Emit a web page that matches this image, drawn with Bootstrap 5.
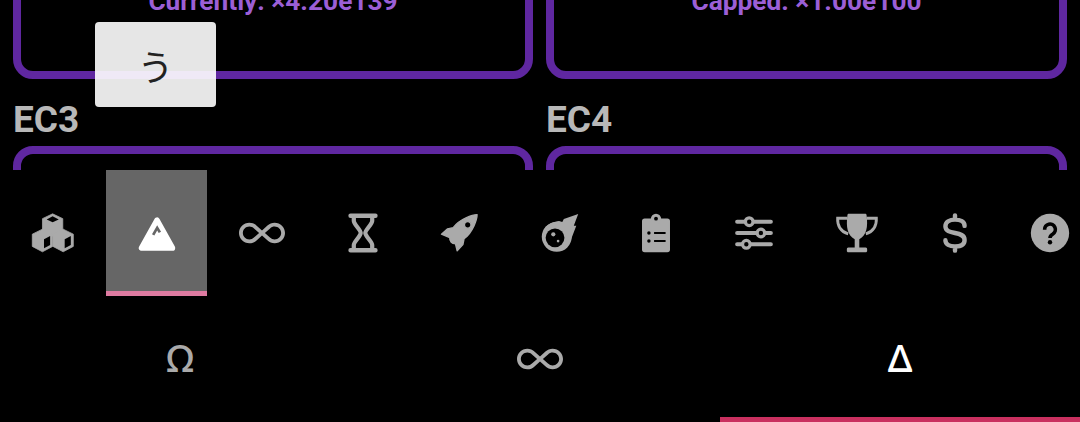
<!DOCTYPE html>
<html lang="en">
<head>
  <meta charset="UTF-8" />
  <meta name="viewport" content="width=device-width, initial-scale=1.0" />
  <title>Epsilon Challenges</title>
  <link href="https://cdn.jsdelivr.net/npm/bootstrap@5.3.3/dist/css/bootstrap.min.css" rel="stylesheet">
  <style>
    body {
      background-color: #000;
      font-family: Roboto, "Noto Sans", sans-serif;
      overflow: hidden;
    }
    .page-wrap {
      width: 1080px;
      height: 422px;
    }
    .scroll-area {
      height: 170px;
      overflow: hidden;
      padding: 0 13px;
    }
    .ec-row {
      --bs-gutter-x: 13px;
      --bs-gutter-y: 0;
    }
    .ec-row > .ec-left {
      width: 533px;
    }
    .ec-row > .ec-right {
      width: 534px;
    }
    .ec-card {
      background: transparent;
      border: 8px solid #5f27a0;
      border-radius: 20px;
    }
    .ec-card.cut-top {
      height: 139px;
      margin-top: -60px;
      text-align: center;
    }
    .ec-card.cut-bottom {
      height: 100px;
    }
    .ec-reward {
      color: #9c5fd6;
      font-size: 26.3px;
      font-weight: 700;
      line-height: 30px;
      margin-top: 38px;
    }
    .ec-title {
      color: #b8b8b8;
      font-size: 37px;
      font-weight: 700;
      line-height: 43px;
      margin: 19px 0 5px 0;
    }
    .kana-tip {
      position: absolute;
      left: 95px;
      top: 22px;
      width: 121px;
      height: 85px;
      background: rgba(255, 255, 255, .9);
      border-radius: 4px;
      color: #222;
      font-family: "Noto Sans CJK JP", sans-serif;
      font-size: 36px;
    }
    .tab-bar {
      display: grid;
      grid-template-columns: 106px 101px 110px 91px 105px 94px 98px 98px 108px 88px 102px;
      height: 126px;
      overflow: hidden;
      width: 1080px;
    }
    .tab-bar .nav-link,
    .sub-tabs .nav-link {
      color: #aaa;
      padding: 0;
      border-bottom: 5px solid transparent;
      border-top: 5px solid transparent;
      border-radius: 0;
    }
    .tab-bar .nav-link.active {
      background: #666;
      color: #fff;
      border-bottom-color: #de7ba1;
      border-top-color: #666;
    }
    .tab-bar svg,
    .sub-tabs svg {
      display: block;
      fill: currentColor;
    }
    .sub-tabs {
      height: 126px;
    }
    .sub-tabs .nav-link {
      font-family: "Noto Sans", sans-serif;
      font-size: 38px;
      font-weight: 500;
      line-height: 1;
    }
    .sub-tabs .nav-link.active {
      color: #fff;
      border-bottom-color: #c9305f;
    }
    .tab-glyph {
      padding-bottom: 4px;
    }
  </style>
</head>
<body>
  <div class="page-wrap position-relative">
    <div class="scroll-area">
      <div class="row ec-row">
        <div class="col-6 ec-left">
          <div class="card ec-card cut-top"><div class="ec-reward">Currently: ×4.20e139</div></div>
          <div class="ec-title">EC3</div>
          <div class="card ec-card cut-bottom"></div>
        </div>
        <div class="col-6 ec-right">
          <div class="card ec-card cut-top"><div class="ec-reward">Capped: ×1.00e100</div></div>
          <div class="ec-title">EC4</div>
          <div class="card ec-card cut-bottom"></div>
        </div>
      </div>
    </div>

    <div class="kana-tip d-flex align-items-center justify-content-center">う</div>

    <!-- main tabs -->
    <nav class="nav flex-nowrap tab-bar">
      <a class="nav-link d-flex align-items-center justify-content-center" href="#">
        <svg width="46" height="46" viewBox="0 0 24 24">
          <path d="M11.800 2 17.100 4.500V11L11.800 13.600 6.500 11V4.500Z" stroke="currentColor" stroke-width=".4" stroke-linejoin="round"/>
          <path d="M6.500 10 11.800 12.600V19L6.500 21.800 1.200 19V12.600Z" stroke="currentColor" stroke-width=".4" stroke-linejoin="round"/>
          <path d="M17.300 10 22.600 12.600V19L17.300 21.800 12 19V12.600Z" stroke="currentColor" stroke-width=".4" stroke-linejoin="round"/>
          <path d="M11.800 3.300 15 4.900 11.800 6.400 8.700 4.900Z" fill="#000"/>
          <path d="M7.300 15.200 10.500 13.600V18.300L7.300 20Z" fill="#000"/>
          <path d="M18.100 15.200 21.300 13.600V18.300L18.100 20Z" fill="#000"/>
        </svg>
      </a>
      <a class="nav-link active d-flex align-items-center justify-content-center" href="#">
        <svg width="46" height="46" viewBox="0 0 24 24">
          <path d="M12 5.400 4 19.800H20Z" stroke="currentColor" stroke-width="3" stroke-linejoin="round"/>
          <path d="M10 13 12.100 9.300 13.500 11.700" fill="none" stroke="#666" stroke-width="1.400"/>
        </svg>
      </a>
      <a class="nav-link d-flex align-items-center justify-content-center" href="#">
        <svg width="46" height="46" viewBox="0 0 24 24"><path d="M18.6,6.62C21.58,6.62 24,9 24,12C24,14.96 21.58,17.37 18.6,17.37C17.15,17.37 15.8,16.81 14.78,15.8L12,13.34L9.17,15.85C8.2,16.82 6.84,17.38 5.4,17.38C2.42,17.38 0,14.96 0,12C0,9.04 2.42,6.62 5.4,6.62C6.84,6.62 8.2,7.18 9.22,8.2L12,10.66L14.83,8.15C15.8,7.18 17.16,6.62 18.6,6.62M7.8,14.39L10.5,12L7.84,9.65C7.16,8.97 6.31,8.62 5.4,8.62C3.53,8.62 2,10.13 2,12C2,13.87 3.53,15.38 5.4,15.38C6.31,15.38 7.16,15.03 7.8,14.39M16.2,9.61L13.5,12L16.16,14.35C16.84,15.03 17.7,15.38 18.6,15.38C20.47,15.38 22,13.87 22,12C22,10.13 20.47,8.62 18.6,8.62C17.69,8.62 16.84,8.97 16.2,9.61Z"/></svg>
      </a>
      <a class="nav-link d-flex align-items-center justify-content-center" href="#">
        <svg width="46" height="46" viewBox="0 0 24 24">
          <path d="M5.500 3H18.500M5.500 21H18.500" stroke="currentColor" stroke-width="2.300" stroke-linecap="round"/>
          <path d="M7.200 3V5.800C7.200 7.400 10.800 10.400 10.800 12C10.800 13.600 7.200 16.600 7.200 18.200V21M16.800 3V5.800C16.800 7.400 13.200 10.400 13.200 12C13.200 13.600 16.800 16.600 16.800 18.200V21" fill="none" stroke="currentColor" stroke-width="2.200"/>
        </svg>
      </a>
      <a class="nav-link d-flex align-items-center justify-content-center" href="#">
        <svg width="46" height="46" viewBox="0 0 24 24">
          <path fill-rule="evenodd" transform="translate(-.8 0)" stroke="currentColor" stroke-width=".7" stroke-linejoin="round" d="M2.600 12.600 5.800 9.800 8.700 9.200C12.100 4.500 19 2.400 21.200 2.400C21.200 4.700 19.100 11.600 14.400 15L13.800 18 10.800 21.300 9.900 17.600C8.500 17.600 8.500 17.600 7.700 16.800C6.900 16 6.900 16 6.900 14.400ZM16.300 6.100A1.700 1.700 0 1 0 16.300 9.500 1.700 1.700 0 1 0 16.300 6.100Z"/>
        </svg>
      </a>
      <a class="nav-link d-flex align-items-center justify-content-center" href="#">
        <svg width="46" height="46" viewBox="0 0 24 24">
          <circle cx="10.300" cy="14" r="7.800"/>
          <path d="M21.500 2.100 19.200 8.200 20.500 8.200 17.500 16 4 9.500C6 7 9 6.200 11.500 5.800L13.200 6.200 14 4.700Z"/>
          <circle cx="9.400" cy="14.500" r="4.900" fill="#000"/>
          <circle cx="8.500" cy="12.700" r="1.100"/>
          <circle cx="11" cy="16.200" r=".7"/>
        </svg>
      </a>
      <a class="nav-link d-flex align-items-center justify-content-center" href="#">
        <svg width="46" height="46" viewBox="0 0 24 24">
          <rect x="4.700" y="4.400" width="14.600" height="17.600" rx="1.400"/>
          <circle cx="12" cy="4.700" r="2.700"/>
          <circle cx="12" cy="4.500" r="1" fill="#000"/>
          <circle cx="8.300" cy="12" r=".9" fill="#000"/>
          <circle cx="8.300" cy="16.200" r=".9" fill="#000"/>
          <path d="M11 12H17M11 16.200H17" stroke="#000" stroke-width="1.100"/>
        </svg>
      </a>
      <a class="nav-link d-flex align-items-center justify-content-center" href="#">
        <svg width="46" height="46" viewBox="0 0 24 24">
          <path d="M3.200 6.100H20.800M3.200 12H20.800M3.200 17.900H20.800" stroke="currentColor" stroke-width="2.100" stroke-linecap="round"/>
          <circle cx="9.500" cy="6.100" r="2" fill="#000" stroke="currentColor" stroke-width="1.700"/>
          <circle cx="15.600" cy="12" r="2" fill="#000" stroke="currentColor" stroke-width="1.700"/>
          <circle cx="8" cy="17.900" r="2" fill="#000" stroke="currentColor" stroke-width="1.700"/>
        </svg>
      </a>
      <a class="nav-link d-flex align-items-center justify-content-center" href="#">
        <svg width="46" height="46" viewBox="0 0 24 24">
          <path d="M7 2.700C7 2.300 7.300 2 7.700 2H16.300C16.700 2 17 2.300 17 2.700C17.800 9 17 13 13.200 15.200V19.500H16.500C17.100 19.500 17.300 19.900 17.300 20.700V21.200C17.300 21.700 17 22 16.500 22H7.500C7 22 6.700 21.700 6.700 21.200V20.700C6.700 19.900 6.900 19.500 7.500 19.500H10.800V15.200C7 13 6.200 9 7 2.700Z"/>
          <path d="M7 4.300H1.900C1.700 8.200 3.600 11.400 7.400 12.400M17 4.300H22.100C22.300 8.200 20.400 11.400 16.600 12.400" fill="none" stroke="currentColor" stroke-width="1.500"/>
        </svg>
      </a>
      <a class="nav-link d-flex align-items-center justify-content-center" href="#">
        <svg width="46" height="46" viewBox="0 0 24 24">
          <path d="M17 8.300C17 6.100 14.800 5 12 5C9.200 5 7 6.300 7 8.500C7 11 9.400 11.500 12 12C14.600 12.500 17 13.100 17 15.600C17 18 14.800 19 12 19C9.200 19 7 18 7 15.800M12 2.800V5M12 19V21.200" fill="none" stroke="currentColor" stroke-width="2.300" stroke-linecap="round"/>
        </svg>
      </a>
      <a class="nav-link d-flex align-items-center justify-content-center" href="#">
        <svg width="46" height="46" viewBox="0 0 24 24">
          <circle cx="12" cy="12" r="10"/>
          <path d="M9.200 10.300A2.800 2.800 0 1 1 13.500 12.500C12.500 13.100 12 13.500 12 14.600" fill="none" stroke="#000" stroke-width="1.900"/>
          <circle cx="12" cy="16.800" r="1.150" fill="#000"/>
        </svg>
      </a>
    </nav>

    <!-- celestial sub tabs -->
    <nav class="nav nav-justified flex-nowrap sub-tabs">
      <a class="nav-link d-flex align-items-center justify-content-center" href="#"><span class="tab-glyph">Ω</span></a>
      <a class="nav-link d-flex align-items-center justify-content-center" href="#">
        <svg width="46" height="46" viewBox="0 0 24 24"><path d="M18.6,6.62C21.58,6.62 24,9 24,12C24,14.96 21.58,17.37 18.6,17.37C17.15,17.37 15.8,16.81 14.78,15.8L12,13.34L9.17,15.85C8.2,16.82 6.84,17.38 5.4,17.38C2.42,17.38 0,14.96 0,12C0,9.04 2.42,6.62 5.4,6.62C6.84,6.62 8.2,7.18 9.22,8.2L12,10.66L14.83,8.15C15.8,7.18 17.16,6.62 18.6,6.62M7.8,14.39L10.5,12L7.84,9.65C7.16,8.97 6.31,8.62 5.4,8.62C3.53,8.62 2,10.13 2,12C2,13.87 3.53,15.38 5.4,15.38C6.31,15.38 7.16,15.03 7.8,14.39M16.2,9.61L13.5,12L16.16,14.35C16.84,15.03 17.7,15.38 18.6,15.38C20.47,15.38 22,13.87 22,12C22,10.13 20.47,8.62 18.6,8.62C17.69,8.62 16.84,8.97 16.2,9.61Z"/></svg>
      </a>
      <a class="nav-link active d-flex align-items-center justify-content-center" href="#"><span class="tab-glyph">Δ</span></a>
    </nav>
  </div>

  <script src="https://cdn.jsdelivr.net/npm/bootstrap@5.3.3/dist/js/bootstrap.bundle.min.js"></script>
</body>
</html>
